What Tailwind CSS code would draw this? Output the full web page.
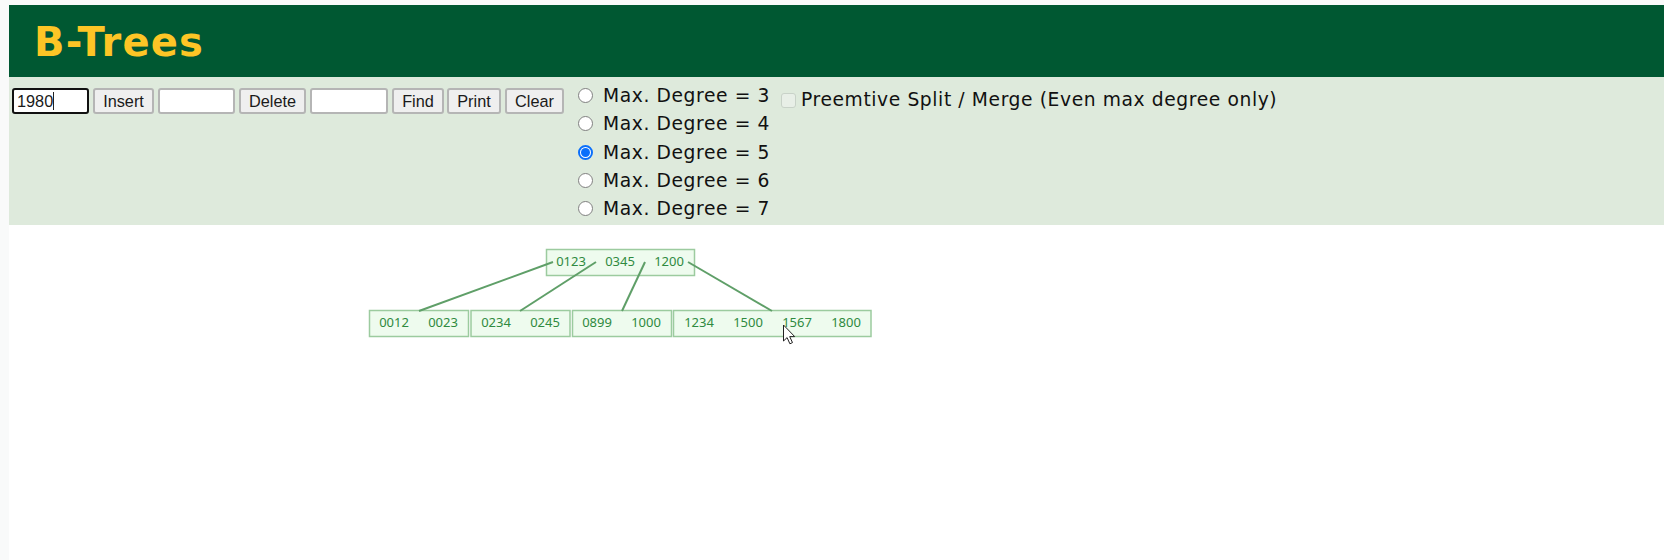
<!DOCTYPE html>
<html>
<head>
<meta charset="utf-8">
<script src="https://cdn.jsdelivr.net/npm/@tailwindcss/browser@4"></script>
</head>
<body class="m-0 bg-[#f9fafa] overflow-hidden">
<div class="w-[1664px] h-[560px] pl-[9px] pt-[5px] flex flex-col font-['DejaVu_Sans',sans-serif]">
  <header class="h-[72px] shrink-0 bg-[#005832] pl-[25px] pt-[1px] flex items-center">
    <h1 class="text-[40px] leading-none font-bold tracking-[1.15px] text-[#fdc526]">B-Trees</h1>
  </header>
  <section class="h-[148px] shrink-0 bg-[#deeadc] flex items-start">
    <div class="flex items-center gap-[4px] pl-[3px] pt-[11px] font-['Liberation_Sans',sans-serif] text-[16.3px] text-[#1a1a1a]">
      <div class="w-[77px] h-[26px] bg-white border-2 border-[#111] rounded-[3px] pl-[3px] flex items-center leading-none">1980<span class="w-px h-[18px] bg-[#222]"></span></div>
      <button class="w-[61px] h-[26px] pt-px bg-[#efefef] border-2 border-[#b5b5b5] rounded-[3px] leading-none">Insert</button>
      <div class="w-[77px] h-[26px] bg-white border-2 border-[#b5b5b5] rounded-[3px]"></div>
      <button class="w-[67px] h-[26px] pt-px bg-[#efefef] border-2 border-[#b5b5b5] rounded-[3px] leading-none">Delete</button>
      <div class="w-[78px] h-[26px] bg-white border-2 border-[#b5b5b5] rounded-[3px]"></div>
      <button class="w-[52px] h-[26px] pt-px bg-[#efefef] border-2 border-[#b5b5b5] rounded-[3px] leading-none">Find</button>
      <button class="w-[54px] h-[26px] pt-px -ml-px bg-[#efefef] border-2 border-[#b5b5b5] rounded-[3px] leading-none">Print</button>
      <button class="w-[59px] h-[26px] pt-px bg-[#efefef] border-2 border-[#b5b5b5] rounded-[3px] leading-none">Clear</button>
    </div>
    <div class="ml-[14px] pt-[5px] flex flex-col text-[18.7px] tracking-[0.6px] leading-[28.25px] text-[#111]">
      <div class="flex items-center"><span class="w-[15px] h-[15px] mb-[1px] rounded-full bg-white border border-[#808080]"></span><span class="ml-[10px]">Max. Degree = 3</span></div>
      <div class="flex items-center"><span class="w-[15px] h-[15px] mb-[1px] rounded-full bg-white border border-[#808080]"></span><span class="ml-[10px]">Max. Degree = 4</span></div>
      <div class="flex items-center"><span class="w-[15px] h-[15px] mb-[1px] rounded-full bg-white border-2 border-[#0b6ffb] flex items-center justify-center"><span class="w-[9px] h-[9px] rounded-full bg-[#0b6ffb]"></span></span><span class="ml-[10px]">Max. Degree = 5</span></div>
      <div class="flex items-center"><span class="w-[15px] h-[15px] mb-[1px] rounded-full bg-white border border-[#808080]"></span><span class="ml-[10px]">Max. Degree = 6</span></div>
      <div class="flex items-center"><span class="w-[15px] h-[15px] mb-[1px] rounded-full bg-white border border-[#808080]"></span><span class="ml-[10px]">Max. Degree = 7</span></div>
    </div>
    <div class="ml-[11px] pt-[9px] flex items-center text-[18.7px] tracking-[0.6px] leading-[28px] text-[#111]">
      <span class="w-[15px] h-[15px] rounded-[3px] bg-[#e8efe7] border border-[#c8d2c8]"></span>
      <span class="ml-[5px]">Preemtive Split / Merge (Even max degree only)</span>
    </div>
  </section>
  <main class="flex-1 bg-white relative">
    <svg class="absolute top-[-225px] left-[-9px]" width="1664" height="560" viewBox="0 0 1664 560" font-family="'Noto Sans', sans-serif" font-size="13" text-anchor="middle" fill="#2f8a40">
      <g fill="#eefbee" stroke="#9ccb9f" stroke-width="1.5">
        <rect x="546.5" y="249.5" width="148" height="26"/>
        <rect x="369.5" y="310.5" width="99" height="26"/>
        <rect x="471" y="310.5" width="99" height="26"/>
        <rect x="572.5" y="310.5" width="99" height="26"/>
        <rect x="673.5" y="310.5" width="197.5" height="26"/>
      </g>
      <g>
        <text x="571" y="266">0123</text><text x="620" y="266">0345</text><text x="669" y="266">1200</text>
        <text x="394" y="327">0012</text><text x="443" y="327">0023</text>
        <text x="496" y="327">0234</text><text x="545" y="327">0245</text>
        <text x="597" y="327">0899</text><text x="646" y="327">1000</text>
        <text x="699" y="327">1234</text><text x="748" y="327">1500</text><text x="797" y="327">1567</text><text x="846" y="327">1800</text>
      </g>
      <g stroke="#5f9f68" stroke-width="2" fill="none">
        <line x1="419" y1="311" x2="553" y2="262"/>
        <line x1="520" y1="311" x2="596" y2="262"/>
        <line x1="622" y1="311" x2="645" y2="262"/>
        <line x1="772" y1="311" x2="688" y2="262"/>
      </g>
      <path d="M783.5 325 v16 l3.6-3.4 2.8 6.2 2.6-1.2-2.8-6 h5 z" fill="#fff" stroke="#222" stroke-width="1"/>
    </svg>
  </main>
</div>
</body>
</html>
